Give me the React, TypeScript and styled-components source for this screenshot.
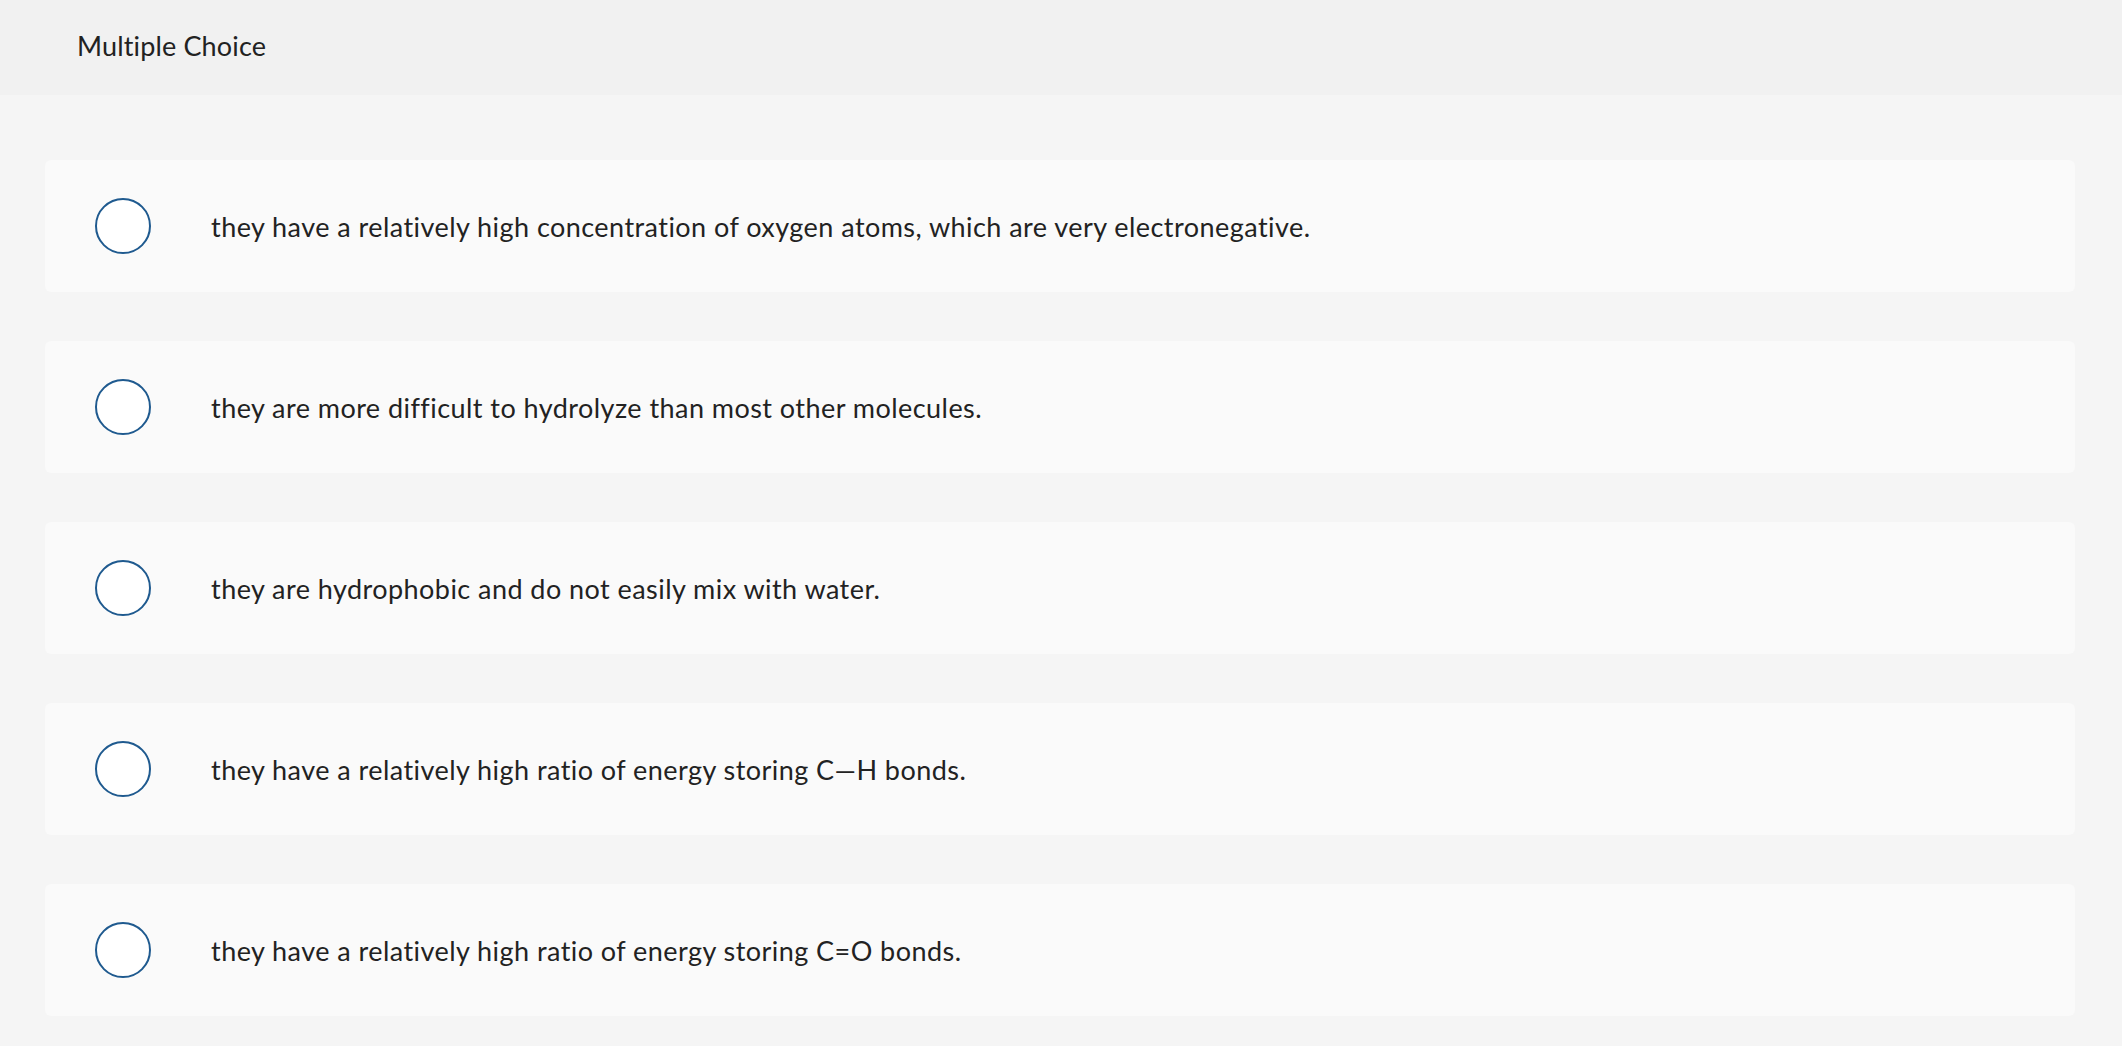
import React from "react";
import styled, { createGlobalStyle } from "styled-components";

const Global = createGlobalStyle`
  html, body { margin: 0; padding: 0; background: #f5f5f5; }
  body { font-family: Lato, "Open Sans", sans-serif; color: #222; font-variant-ligatures: none; }
`;

const Page = styled.div`
  min-height: 1046px;
  background: #f5f5f5;
`;

const Header = styled.header`
  height: 95px;
  box-sizing: border-box;
  padding: 0 0 4px 77px;
  background: #f1f1f1;
  display: flex;
  align-items: center;
  font-size: 27px;
  letter-spacing: 0.15px;
  color: #222;
`;

const List = styled.div`
  display: flex;
  flex-direction: column;
  gap: 49px;
  padding: 65px 47px 0 45px;
`;

const Card = styled.label`
  height: 132px;
  background: #fafafa;
  border-radius: 6px;
  display: flex;
  align-items: center;
  padding-left: 50px;
  box-sizing: border-box;
`;

const Radio = styled.span`
  width: 56px;
  height: 56px;
  box-sizing: border-box;
  border: 2px solid #1f5a8f;
  border-radius: 50%;
  background: #fff;
  flex: none;
`;

const Text = styled.span`
  margin-left: 60px;
  font-size: 27px;
  letter-spacing: 0.45px;
  color: #222;
`;

const options = [
  "they have a relatively high concentration of oxygen atoms, which are very electronegative.",
  "they are more difficult to hydrolyze than most other molecules.",
  "they are hydrophobic and do not easily mix with water.",
  "they have a relatively high ratio of energy storing C\u2014H bonds.",
  "they have a relatively high ratio of energy storing C=O bonds.",
];

export default function App() {
  return (
    <Page>
      <Global />
      <Header>Multiple Choice</Header>
      <List>
        {options.map((o) => (
          <Card key={o}>
            <Radio />
            <Text>{o}</Text>
          </Card>
        ))}
      </List>
    </Page>
  );
}
